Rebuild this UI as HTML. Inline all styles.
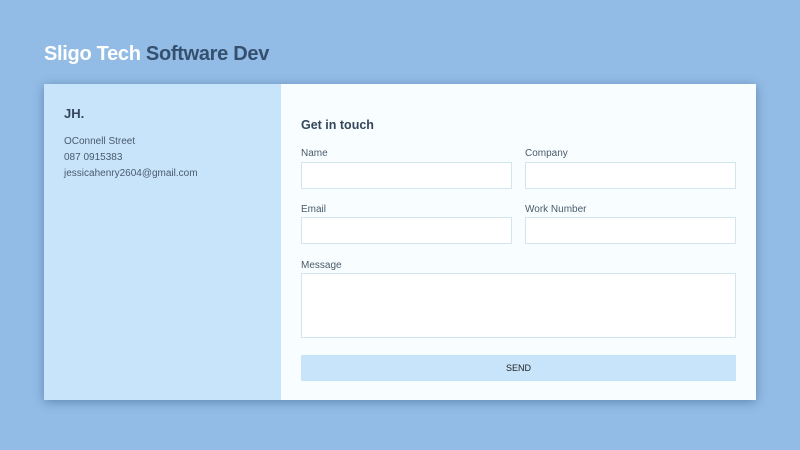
<!DOCTYPE html>
<html><head><style>
*{box-sizing:border-box;margin:0;padding:0}
body{width:800px;height:450px;background:#92bce6;font-family:"Liberation Sans",sans-serif;position:relative;overflow:hidden;color:#3f4f61}
.abs{position:absolute}
h1{position:absolute;left:44px;top:43px;font-size:20px;font-weight:bold;color:#fff;letter-spacing:-0.3px}
h1 span{color:#34506e}
.card{position:absolute;left:44px;top:84px;width:712px;height:316px;background:#f8feff;box-shadow:0 2px 10px rgba(40,70,110,.45)}
.left{position:absolute;left:0;top:0;width:237px;height:316px;background:#c8e4fb}
.lbl{position:absolute;font-size:10px;color:#4a5a6a}
.inp{position:absolute;background:#fff;border:1px solid #d3e6ef}
.btn{position:absolute;left:301px;top:355px;width:435px;height:26px;background:#c8e4fb;font-size:9px;color:#222;text-align:center;line-height:26px}
</style></head><body>
<h1>Sligo Tech <span>Software Dev</span></h1>
<div class="card"><div class="left"></div></div>
<div class="abs" style="left:64px;top:106px;font-size:13px;font-weight:bold;color:#34465a">JH.</div>
<div class="abs" style="left:64px;top:134px;font-size:10px;line-height:16px;color:#4a5a6a">OConnell Street<br>087 0915383<br>jessicahenry2604@gmail.com</div>
<div class="abs" style="left:301px;top:118px;font-size:12.5px;font-weight:bold;color:#34465a">Get in touch</div>
<div class="lbl" style="left:301px;top:148px">Name</div>
<div class="lbl" style="left:525px;top:148px">Company</div>
<div class="inp" style="left:301px;top:162px;width:211px;height:27px"></div>
<div class="inp" style="left:525px;top:162px;width:211px;height:27px"></div>
<div class="lbl" style="left:301px;top:204px">Email</div>
<div class="lbl" style="left:525px;top:204px">Work Number</div>
<div class="inp" style="left:301px;top:217px;width:211px;height:27px"></div>
<div class="inp" style="left:525px;top:217px;width:211px;height:27px"></div>
<div class="lbl" style="left:301px;top:260px">Message</div>
<div class="inp" style="left:301px;top:273px;width:435px;height:65px"></div>
<div class="btn">SEND</div>
</body></html>
